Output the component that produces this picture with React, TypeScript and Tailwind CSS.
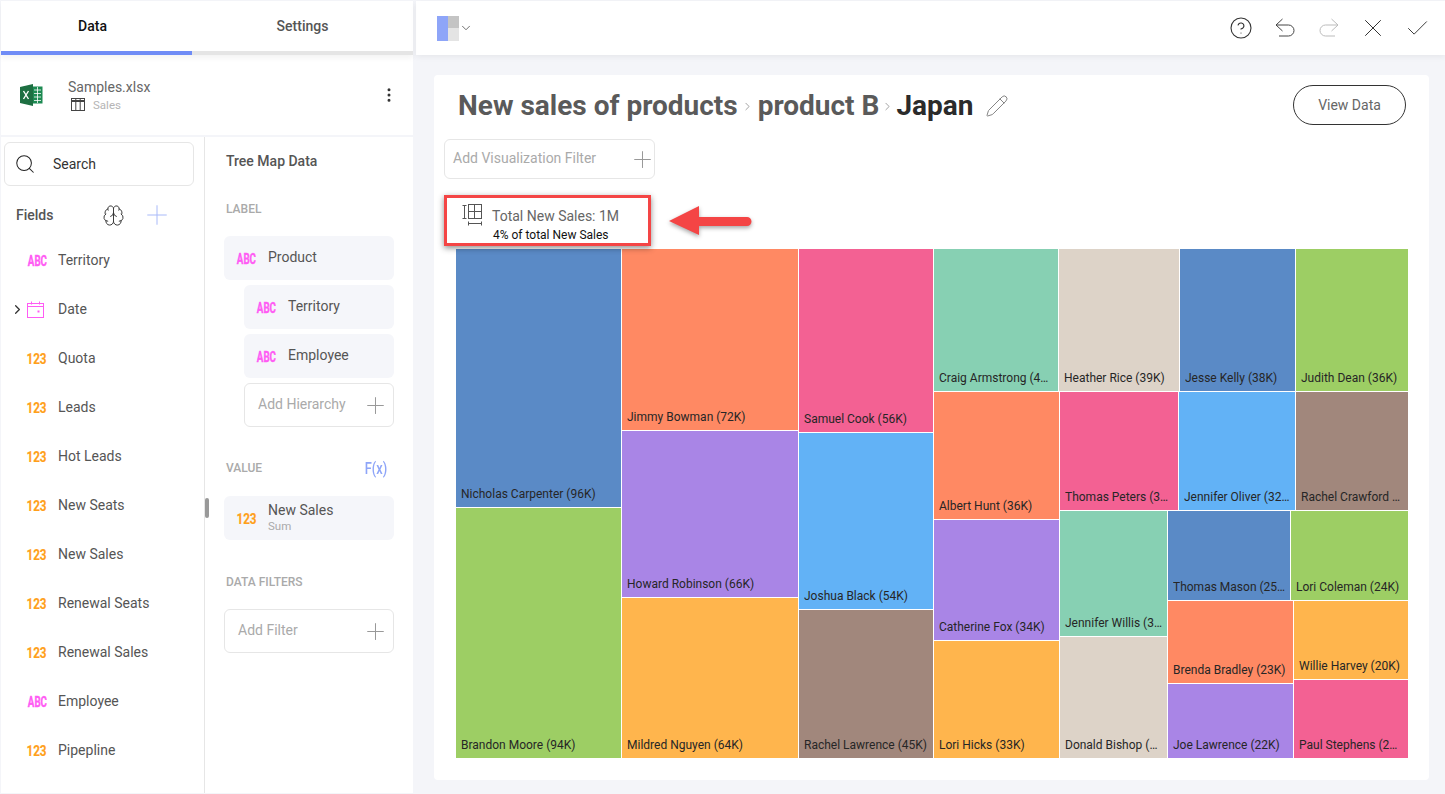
import React from "react";
import { Search, Brain, Plus, EllipsisVertical, ChevronRight, ChevronDown, CircleHelp, X, Check, Pencil } from "lucide-react";

const BLUE = "bg-[#5a8ac6]", ORANGE = "bg-[#ff8963]", PINK = "bg-[#f36193]", TEAL = "bg-[#87d0b3]", BEIGE = "bg-[#ddd3c8]", GREEN = "bg-[#9dce64]", PURPLE = "bg-[#a985e6]", SKY = "bg-[#62b2f6]", BROWN = "bg-[#a1877c]", AMBER = "bg-[#ffb54d]";

function Cell({ name, color, className = "", pr = "pr-[5px]" }: { name: string; color: string; className?: string; pr?: string }) {
  return (
    <div className={`${color} ${className} ${pr} flex flex-col justify-end min-w-0 pl-[5px] pb-[5px]`}>
      <span className="truncate text-[12px] leading-[16px] text-[#262626]">{name}</span>
    </div>
  );
}

function Abc() {
  return <span className="inline-block w-[22px] -ml-px translate-y-px text-center text-[15px] font-bold leading-none text-[#ff5cf4] [-webkit-text-stroke:0.4px_#ff5cf4] scale-x-[0.65] whitespace-nowrap">ABC</span>;
}
function Num() {
  return <span className="inline-block w-[22px] translate-y-px text-center text-[15px] font-bold leading-none text-[#ff9f1a] [-webkit-text-stroke:0.2px_#ff9f1a] scale-x-[0.78] whitespace-nowrap">123</span>;
}

function Field({ kind, name, chevron }: { kind: "abc" | "num" | "date"; name: string; chevron?: boolean }) {
  return (
    <div className="h-[49px] flex items-center pl-[13px]">
      <span className="w-[10px] flex items-center">
        {chevron && <ChevronRight size={15} strokeWidth={2} className="text-[#333] shrink-0 -ml-[4px]" />}
      </span>
      <span className="w-[22px] flex justify-center">
        {kind === "abc" && <Abc />}
        {kind === "num" && <Num />}
        {kind === "date" && (
          <svg width="17" height="17" viewBox="0 0 17 17" fill="none" stroke="#ff5cf4" strokeWidth="1">
            <rect x="0.5" y="2.5" width="16" height="14" />
            <path d="M0.5 5.5h16M4.5 0.5v3M12.5 0.5v3" />
            <rect x="10.5" y="9.5" width="2" height="2" fill="#ff5cf4" stroke="none" />
          </svg>
        )}
      </span>
      <span className="ml-[12px] text-[14px] text-[#555]">{name}</span>
    </div>
  );
}

function Chip({ kind, name, sub, className = "" }: { kind: "abc" | "num"; name: string; sub?: string; className?: string }) {
  return (
    <div className={`h-[44px] rounded-[6px] bg-[#f5f6fa] flex items-center pl-[10px] ${className}`}>
      {kind === "abc" ? <Abc /> : <Num />}
      <div className={`${kind === "abc" ? "ml-[13px]" : "ml-[12px]"} flex flex-col pb-[2px]`}>
        <span className="text-[14px] leading-[16px] text-[#555]">{name}</span>
        {sub && <span className="text-[11.5px] leading-[14px] mt-px text-[#aaa]">{sub}</span>}
      </div>
    </div>
  );
}

function AddBox({ label, className = "" }: { label: string; className?: string }) {
  return (
    <div className={`h-[44px] rounded-[6px] border border-[#e6e6e6] flex items-center justify-between pl-[13px] pr-[4px] ${className}`}>
      <span className="text-[14px] pb-[2px] text-[#aaa]">{label}</span>
      <Plus size={27} strokeWidth={0.9} className="text-[#999]" />
    </div>
  );
}

function SectionLabel({ children }: { children: React.ReactNode }) {
  return <span className="text-[12px] font-medium text-[#aaa]">{children}</span>;
}

function UndoGlyph({ color }: { color: string }) {
  return (
    <svg width="20" height="20" viewBox="0 0 20 20" fill="none" stroke={color} strokeWidth="1">
      <path d="M7.5 1 L1 7 L7.5 13" />
      <path d="M1 7 H13.5 a5.5 5.5 0 0 1 0 11 H4" />
    </svg>
  );
}

export default function App() {
  return (
    <div className="w-[1445px] h-[794px] overflow-hidden bg-[#f4f5f9] flex pt-px pb-px pl-px font-['Roboto',sans-serif]">
      {/* Left panel */}
      <div className="w-[412px] shrink-0 bg-white flex flex-col">
        <div className="h-[54px] flex shrink-0 shadow-[0_3px_6px_rgba(0,0,0,0.05)] z-10">
          <div className="w-[191px] border-b-4 border-[#6f8cf6] flex items-center justify-center pr-[8px] text-[14px] font-medium text-[#111]">Data</div>
          <div className="w-[221px] border-b-4 border-[#e5e5e5] flex items-center justify-center text-[14px] font-medium text-[#555]">Settings</div>
        </div>
        <div className="h-[82px] shrink-0 border-b-2 border-[#f4f5f9] flex items-center pl-[19px] pr-[15px]">
          <svg width="23" height="22" viewBox="0 0 23 22" className="shrink-0">
            <path d="M0 3 L13 0 V22 L0 19Z" fill="#1d6f42" />
            <rect x="13" y="2.5" width="9.5" height="17" fill="#1d8a52" />
            <path d="M14 6h7M14 9.5h7M14 13h7M14 16.5h7M17.5 3v16" stroke="#fff" strokeWidth="0.8" />
            <path d="M3.5 7l5 8M8.5 7l-5 8" stroke="#fff" strokeWidth="1.4" />
          </svg>
          <div className="ml-[25px] flex flex-col flex-1">
            <span className="text-[14px] leading-[18px] text-[#666]">Samples.xlsx</span>
            <span className="flex items-center text-[11.5px] leading-[16px] text-[#b5b5b5] mt-[1px]">
              <svg width="14" height="13" viewBox="0 0 14 13" className="mr-[8px] ml-[3px]" fill="none" stroke="#444" strokeWidth="1">
                <rect x="0.5" y="0.5" width="13" height="12" />
                <path d="M0.5 3.5h13M4.8 0.5v12M9.2 0.5v12M0.5 0.5h13v2h-13z" />
              </svg>
              Sales
            </span>
          </div>
          <EllipsisVertical size={18} strokeWidth={2} className="text-[#333]" />
        </div>
        <div className="flex flex-1 min-h-0">
          {/* Fields */}
          <div className="w-[204px] shrink-0 border-r border-[#e6e6e6] relative">
            <div className="ml-[3px] mt-[5px] w-[190px] h-[44px] rounded-[6px] border border-[#e6e6e6] flex items-center pl-[9px]">
              <Search size={22} strokeWidth={1.1} className="text-[#222]" />
              <span className="ml-[17px] text-[14px] text-[#333]">Search</span>
            </div>
            <div className="h-[50px] flex items-center pl-[15px] pt-[8px]">
              <span className="text-[14px] font-medium text-[#555]">Fields</span>
              <Brain size={23} strokeWidth={1} className="ml-[49px] text-[#333]" />
              <Plus size={32} strokeWidth={0.75} className="ml-[16px] text-[#a9baf9]" />
            </div>
            <Field kind="abc" name="Territory" />
            <Field kind="date" name="Date" chevron />
            <Field kind="num" name="Quota" />
            <Field kind="num" name="Leads" />
            <Field kind="num" name="Hot Leads" />
            <Field kind="num" name="New Seats" />
            <Field kind="num" name="New Sales" />
            <Field kind="num" name="Renewal Seats" />
            <Field kind="num" name="Renewal Sales" />
            <Field kind="abc" name="Employee" />
            <Field kind="num" name="Pipepline" />
            <div className="absolute right-[-5px] top-[361px] w-[4px] h-[20px] rounded-full bg-[#999]" />
          </div>
          {/* Data */}
          <div className="flex-1 px-[19px]">
            <div className="h-[48px] flex items-center pl-[2px] text-[14px] font-medium text-[#555]">Tree Map Data</div>
            <div className="h-[51px] flex items-center pl-[2px] pb-[4px]"><SectionLabel>LABEL</SectionLabel></div>
            <div className="flex flex-col gap-[5px]">
              <Chip kind="abc" name="Product" />
              <Chip kind="abc" name="Territory" className="ml-[20px]" />
              <Chip kind="abc" name="Employee" className="ml-[20px]" />
              <AddBox label="Add Hierarchy" className="ml-[20px]" />
            </div>
            <div className="h-[69px] flex items-end justify-between pl-[2px] pr-[4px] pb-[19px]">
              <SectionLabel>VALUE</SectionLabel>
              <span className="text-[16px] leading-none font-medium text-[#8ea5f8] scale-x-[0.8]">F(x)</span>
            </div>
            <Chip kind="num" name="New Sales" sub="Sum" />
            <div className="h-[69px] flex items-center pl-[2px] pt-[14px]"><SectionLabel>DATA FILTERS</SectionLabel></div>
            <AddBox label="Add Filter" />
          </div>
        </div>
      </div>

      {/* Right */}
      <div className="flex-1 min-w-0 flex flex-col ml-[3px] relative">
        <div className="h-[54px] shrink-0 bg-white shadow-[0_2px_6px_rgba(0,0,0,0.06)] flex items-center pl-[21px] pr-[6px]">
          <div className="w-[22px] h-[25px] flex">
            <div className="w-[11px] bg-[#8ea5f8]" />
            <div className="w-[11px] flex flex-col">
              <div className="h-[12px] bg-[#c4c4c4]" />
              <div className="h-[13px] bg-[#e4e4e4]" />
            </div>
          </div>
          <ChevronDown size={14} strokeWidth={1.3} className="text-[#444]" />
          <div className="ml-auto flex items-center">
            <span className="w-[44px] flex justify-center"><CircleHelp size={24} strokeWidth={1.1} className="text-[#333]" /></span>
            <span className="w-[44px] flex justify-center"><UndoGlyph color="#444" /></span>
            <span className="w-[44px] flex justify-center -scale-x-100"><UndoGlyph color="#bbb" /></span>
            <span className="w-[44px] flex justify-center"><X size={30} strokeWidth={0.8} className="text-[#333]" /></span>
            <span className="w-[44px] flex justify-center"><Check size={27} strokeWidth={0.85} className="text-[#333]" /></span>
          </div>
        </div>

        <div className="flex-1 min-h-0 pl-[18px] pr-[16px] pt-[20px] pb-[13px]">
          <div className="h-full bg-white rounded-[4px] flex flex-col pl-[10px] pr-[23px] pt-[10px] relative">
            <div className="flex items-center h-[40px] pl-[14px]">
              <div className="flex items-center pt-[2px]">
                <span className="text-[28px] font-bold text-[#5a5a5a]">New sales of products</span>
                <ChevronRight size={13} strokeWidth={1} className="ml-[3px] mr-[4px] text-[#555]" />
                <span className="text-[28px] font-bold text-[#5a5a5a]">product B</span>
                <ChevronRight size={13} strokeWidth={1} className="mx-[2px] text-[#555]" />
                <span className="text-[28px] font-bold text-[#2b2b2b]">Japan</span>
                <Pencil size={24} strokeWidth={0.9} className="ml-[11px] text-[#777]" />
              </div>
              <div className="ml-auto w-[113px] h-[40px] rounded-full border border-[#333] flex items-center justify-center text-[14px] text-[#666]">View Data</div>
            </div>
            <div className="mt-[14px] w-[211px] h-[40px] rounded-[6px] border border-[#e6e6e6] flex items-center justify-between pl-[8px]">
              <span className="text-[14px] leading-[36px] text-[#aaa] -mt-[2px]">Add Visualization Filter</span>
              <Plus size={27} strokeWidth={0.9} className="text-[#999] -mr-[2px]" />
            </div>

            {/* Tree map */}
            <div className="mt-[70px] ml-[12px] w-[952px] h-[509px] flex gap-px bg-white">
              <div className="w-[165px] flex flex-col gap-px">
                <Cell name="Nicholas Carpenter (96K)" color={BLUE} className="h-[258px]" />
                <Cell name="Brandon Moore (94K)" color={GREEN} className="flex-1" />
              </div>
              <div className="w-[176px] flex flex-col gap-px">
                <Cell name="Jimmy Bowman (72K)" color={ORANGE} className="h-[181px]" />
                <Cell name="Howard Robinson (66K)" color={PURPLE} className="h-[166px]" />
                <Cell name="Mildred Nguyen (64K)" color={AMBER} className="flex-1" />
              </div>
              <div className="w-[134px] flex flex-col gap-px">
                <Cell name="Samuel Cook (56K)" color={PINK} className="h-[183px]" />
                <Cell name="Joshua Black (54K)" color={SKY} className="h-[176px]" />
                <Cell name="Rachel Lawrence (45K)" color={BROWN} className="flex-1" />
              </div>
              <div className="flex-1 min-w-0 flex flex-col gap-px">
                <div className="h-[142px] flex gap-px">
                  <Cell name="Craig Armstrong (40K)" color={TEAL} className="w-[124px]" />
                  <Cell name="Heather Rice (39K)" color={BEIGE} className="w-[120px]" />
                  <Cell name="Jesse Kelly (38K)" color={BLUE} className="w-[115px]" />
                  <Cell name="Judith Dean (36K)" color={GREEN} className="flex-1" />
                </div>
                <div className="flex-1 min-h-0 flex gap-px">
                  <div className="w-[125px] flex flex-col gap-px">
                    <Cell name="Albert Hunt (36K)" color={ORANGE} className="h-[127px]" />
                    <Cell name="Catherine Fox (34K)" color={PURPLE} className="h-[120px]" />
                    <Cell name="Lori Hicks (33K)" color={AMBER} className="flex-1" />
                  </div>
                  <div className="flex-1 min-w-0 flex flex-col gap-px">
                    <div className="h-[118px] flex gap-px">
                      <Cell name="Thomas Peters (33K)" color={PINK} className="w-[118px]" />
                      <Cell name="Jennifer Oliver (32K)" color={SKY} className="w-[116px]" pr="pr-[3px]" />
                      <Cell name="Rachel Crawford (31K)" color={BROWN} className="flex-1" pr="pr-[7px]" />
                    </div>
                    <div className="flex-1 min-h-0 flex gap-px">
                      <div className="w-[107px] flex flex-col gap-px">
                        <Cell name="Jennifer Willis (30K)" color={TEAL} className="h-[125px]" />
                        <Cell name="Donald Bishop (29K)" color={BEIGE} className="flex-1" />
                      </div>
                      <div className="flex-1 min-w-0 flex flex-col gap-px">
                        <div className="h-[89px] flex gap-px">
                          <Cell name="Thomas Mason (25K)" color={BLUE} className="w-[122px]" pr="pr-[2px]" />
                          <Cell name="Lori Coleman (24K)" color={GREEN} className="flex-1" />
                        </div>
                        <div className="flex-1 min-h-0 flex gap-px">
                          <div className="w-[125px] flex flex-col gap-px">
                            <Cell name="Brenda Bradley (23K)" color={ORANGE} className="h-[82px]" />
                            <Cell name="Joe Lawrence (22K)" color={PURPLE} className="flex-1" />
                          </div>
                          <div className="flex-1 min-w-0 flex flex-col gap-px">
                            <Cell name="Willie Harvey (20K)" color={AMBER} className="h-[78px]" />
                            <Cell name="Paul Stephens (20K)" color={PINK} className="flex-1" />
                          </div>
                        </div>
                      </div>
                    </div>
                  </div>
                </div>
              </div>
            </div>

            {/* Tooltip callout */}
            <div className="absolute left-[10px] top-[120px] w-[207px] h-[51px] bg-white border-[3px] border-[#f44545] shadow-[0_2px_6px_rgba(0,0,0,0.45)] flex flex-col pl-[15px] pt-[4px]">
              <div className="flex items-center h-[28px]">
                <svg width="20" height="22" viewBox="0 0 20 22" fill="none" stroke="#555" strokeWidth="1" className="-mt-[2px]">
                  <path d="M0.5 1.5h4M2.5 1.5v13M0.5 14.5h4" />
                  <rect x="6.5" y="0.5" width="13" height="14" />
                  <path d="M6.5 7.5h13M12.5 0.5v14" />
                  <path d="M6.5 19.5h13M6.5 17.5v4M19.5 17.5v4" />
                </svg>
                <span className="ml-[10px] text-[14px] text-[#666]">Total New Sales: 1M</span>
              </div>
              <span className="pl-[31px] -mt-px text-[12px] leading-[13px] text-[#111]">4% of total New Sales</span>
            </div>
            <svg width="84" height="30" viewBox="0 0 84 30" className="absolute left-[235px] top-[131px] drop-shadow-[0_2px_2px_rgba(0,0,0,0.35)]">
              <path d="M0 15 L30 0 V11 H78 a4.5 4.5 0 0 1 0 9 H30 V29 Z" fill="#f44545" />
            </svg>
          </div>
        </div>
      </div>
    </div>
  );
}
